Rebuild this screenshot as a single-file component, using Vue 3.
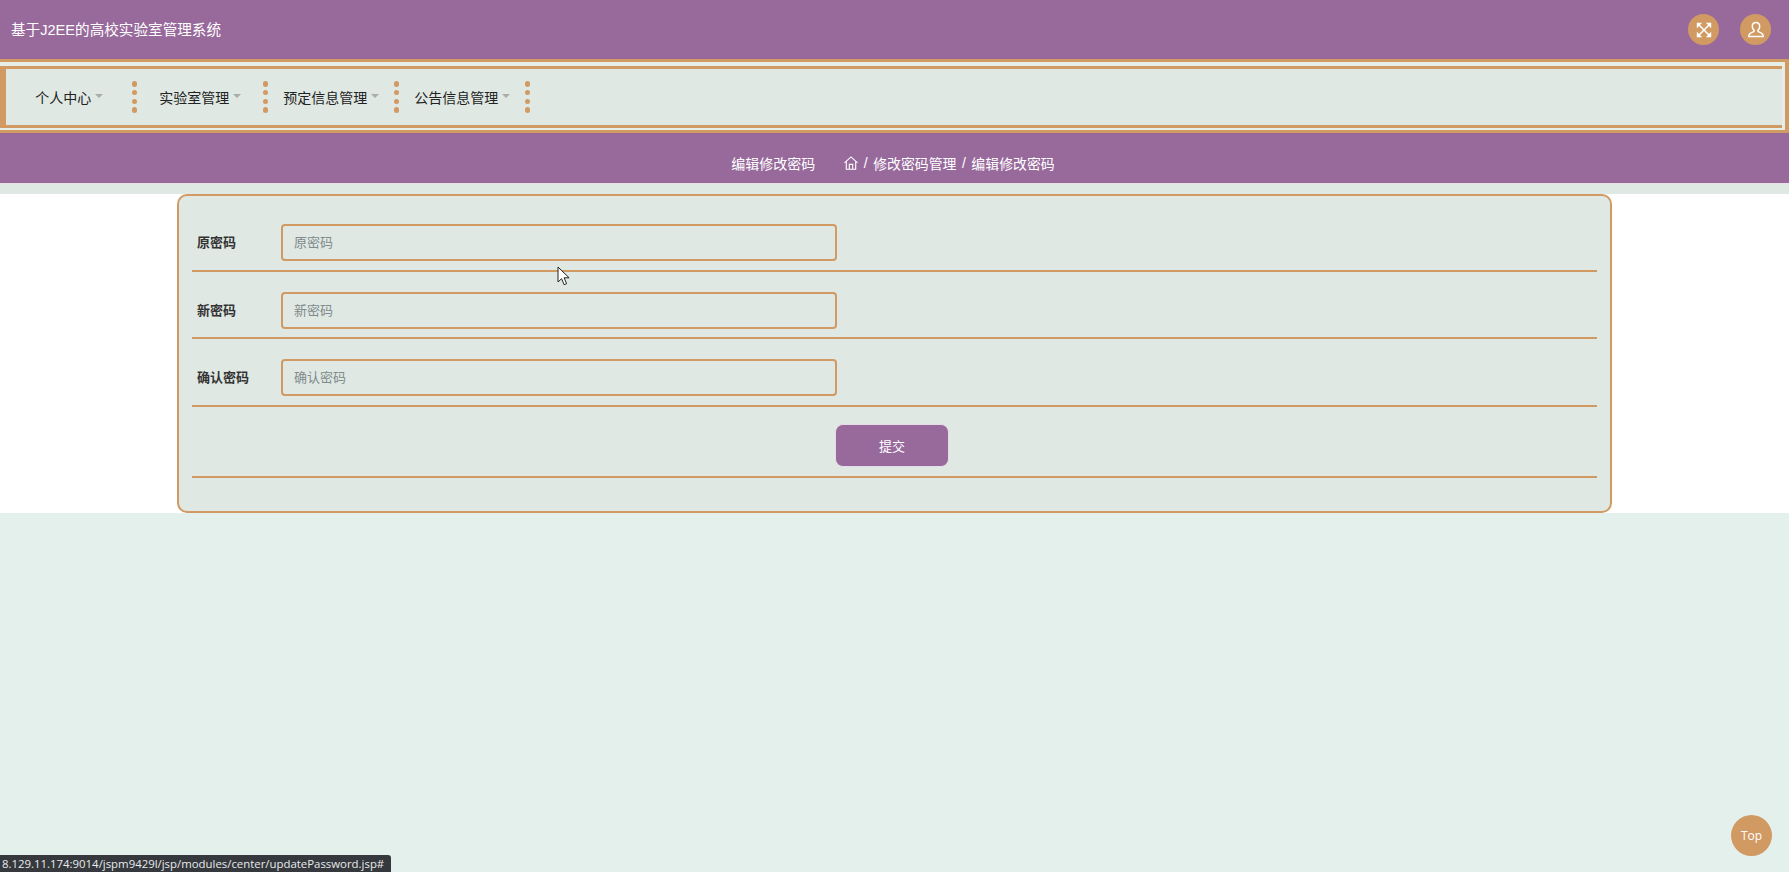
<script setup>
const menus = ['个人中心', '实验室管理', '预定信息管理', '公告信息管理']
const fields = [
  { label: '原密码', placeholder: '原密码' },
  { label: '新密码', placeholder: '新密码' },
  { label: '确认密码', placeholder: '确认密码' }
]
</script>

<template>
  <div class="page">
    <header class="top">
      <div class="title">基于J2EE的高校实验室管理系统</div>
      <div class="top-icons">
        <span class="round">
          <svg width="16" height="16" viewBox="0 0 16 16" fill="#fff" stroke="none">
            <path d="M3 3l10 10M13 3L3 13" fill="none" stroke="#fff" stroke-width="1.500" />
            <path d="M.8.800h5.400L.8 6.200zM15.200.800H9.800l5.400 5.400zM15.200 15.200H9.800l5.400-5.400zM.8 15.200h5.400L.8 9.800z" />
          </svg>
        </span>
        <span class="round">
          <svg width="18" height="18" viewBox="0 0 18 18" fill="none" stroke="#fff" stroke-width="1.500">
            <path d="M9 1.500c-2.300 0-3.700 1.700-3.700 3.900 0 1.600.7 3 1.700 3.800v1.200c0 .6-3.900 1.200-4.700 3-.3.6-.5 1.300-.5 2.100h14.400c0-.8-.2-1.500-.5-2.100-.8-1.800-4.700-2.400-4.700-3V9.200c1-.8 1.700-2.200 1.700-3.800 0-2.200-1.400-3.900-3.700-3.900z" />
          </svg>
        </span>
      </div>
    </header>

    <nav class="nav">
      <div class="nav-inner">
        <div v-for="m in menus" :key="m" class="nav-item">
          <span class="nav-link">{{ m }}<i class="caret"></i></span>
          <span class="dots"><b></b><b></b><b></b><b></b></span>
        </div>
      </div>
    </nav>

    <section class="crumb-bar">
      <span class="crumb-title">编辑修改密码</span>
      <span class="crumbs">
        <svg class="home" width="14" height="14" viewBox="0 0 14 14" fill="none" stroke="#fff" stroke-width="1.100">
          <path d="M.5 6.800 7 .9l6.500 5.900" />
          <path d="M2.300 5.600V13.300h9.400V5.600" />
          <path d="M5.300 13.300V8.400h3.400v4.900" />
        </svg>
        <span class="sep">/</span>修改密码管理<span class="sep">/</span>编辑修改密码
      </span>
    </section>

    <div class="strip"></div>

    <main class="content">
      <form class="card" onsubmit="return false">
        <div v-for="f in fields" :key="f.label" class="row">
          <label class="label">{{ f.label }}</label>
          <input class="input" type="password" :placeholder="f.placeholder" />
        </div>
        <div class="row row-btn">
          <button class="submit" type="button">提交</button>
        </div>
      </form>
    </main>

    <svg class="cursor" width="14" height="20" viewBox="0 0 14 20">
      <path d="M1 1v15l3.600-3.300 2.500 6 2.500-1-2.500-5.900h5z" fill="#fff" stroke="#222" stroke-width="1" />
    </svg>

    <div class="top-btn">Top</div>
    <div class="status">8.129.11.174:9014/jspm9429l/jsp/modules/center/updatePassword.jsp#</div>
  </div>
</template>

<style>
html, body { margin: 0; background: #e4f0ec; }
</style>

<style scoped>
.page {
  position: relative;
  height: 872px;
  overflow: hidden;
  background: #e4f0ec;
  font-family: "Liberation Sans", "Noto Sans CJK SC", sans-serif;
  font-size: 14px;
  color: #333;
}
.top {
  height: 59px;
  background: #986a9c;
  display: flex;
  align-items: center;
  justify-content: space-between;
  padding: 0 18px 0 11px;
  box-sizing: border-box;
}
.title { color: #fff; font-size: 14.600px; margin-top: -2px; }
.top-icons { display: flex; gap: 21px; }
.round {
  width: 31px;
  height: 31px;
  border-radius: 50%;
  background: #d19a63;
  display: flex;
  align-items: center;
  justify-content: center;
}
.nav {
  height: 74px;
  box-sizing: border-box;
  border-top: 3px solid #d19a63;
  border-bottom: 3px solid #d19a63;
  border-right: 4px solid #d19a63;
  background: #e6eeea;
  padding: 4px 3px 2px 0;
}
.nav-inner {
  height: 100%;
  box-sizing: border-box;
  border-style: solid;
  border-color: #d19a63;
  border-width: 3px 0 3px 6px;
  display: flex;
  align-items: center;
  background: #dfe8e3;
}
.nav-item {
  width: 131px;
  flex: none;
  display: flex;
  align-items: center;
}
.nav-link {
  flex: 1;
  display: flex;
  align-items: center;
  justify-content: center;
  color: #222;
  font-size: 14px;
  white-space: nowrap;
  padding-left: 1px;
}
.caret {
  display: inline-block;
  width: 0;
  height: 0;
  margin-left: 4px;
  margin-top: -2px;
  border-style: solid;
  border-width: 4px 4px 0;
  border-color: #a9aeab transparent transparent;
}
.dots { display: flex; flex-direction: column; gap: 3.300px; flex: none; }
.dots b { width: 5.500px; height: 5.500px; border-radius: 50%; background: #d19a63; }
.crumb-bar {
  height: 51px;
  background: #986a9c;
  border-bottom: 1px solid #e9dfe9;
  box-sizing: border-box;
  display: flex;
  align-items: center;
  justify-content: center;
  color: #fff;
  font-size: 14px;
  padding-top: 9px;
  padding-right: 3px;
}
.crumb-title { margin-right: 29px; }
.crumbs { display: inline-flex; align-items: center; font-size: 13.900px; }
.sep { margin: 0 5.500px; }
.strip { height: 10px; background: #dfe8e3; }
.content { background: #fff; padding: 0 177px; height: 319px; }
.card {
  height: 319px;
  box-sizing: border-box;
  background: #dfe8e3;
  border: 2px solid #d19a63;
  border-radius: 10px;
  padding: 8px 13px 0;
}
.row {
  height: 67.500px;
  box-sizing: border-box;
  border-bottom: 2px solid #d19a63;
  display: flex;
  align-items: center;
  padding-top: 12px;
  padding-left: 5px;
}
.label {
  width: 84px;
  font-weight: 700;
  font-size: 13px;
  color: #333;
  flex: none;
  margin-top: -2px;
}
.input {
  width: 556px;
  height: 37px;
  box-sizing: border-box;
  background: #dfe8e3;
  border: 2px solid #d19a63;
  border-radius: 4px;
  padding: 0 11px;
  font: inherit;
  font-size: 13px;
  outline: none;
}
.input::placeholder { color: #808a8a; opacity: 1; }
.row-btn {
  height: 71px;
  padding-left: 643px;
  padding-top: 9px;
}
.submit {
  width: 114px;
  height: 43px;
  border: 1px solid #e6dbe8;
  border-radius: 8px;
  background: #986a9c;
  color: #fff;
  font: inherit;
  font-size: 13px;
}
.cursor { position: absolute; left: 557px; top: 266px; }
.top-btn {
  position: absolute;
  left: 1731px;
  top: 815px;
  width: 41px;
  height: 41px;
  border-radius: 50%;
  background: #d19a63;
  color: #fff;
  font-size: 12px;
  font-family: "Open Sans", sans-serif;
  font-weight: 500;
  display: flex;
  align-items: center;
  justify-content: center;
}
.status {
  position: absolute;
  left: 0;
  bottom: 0;
  width: 391px;
  height: 17px;
  box-sizing: border-box;
  background: #35383c;
  border-top-right-radius: 3px;
  color: #e8eaed;
  font-family: "Open Sans", sans-serif;
  font-size: 11.400px;
  line-height: 18px;
  padding-left: 2px;
  white-space: nowrap;
  overflow: hidden;
}
</style>
